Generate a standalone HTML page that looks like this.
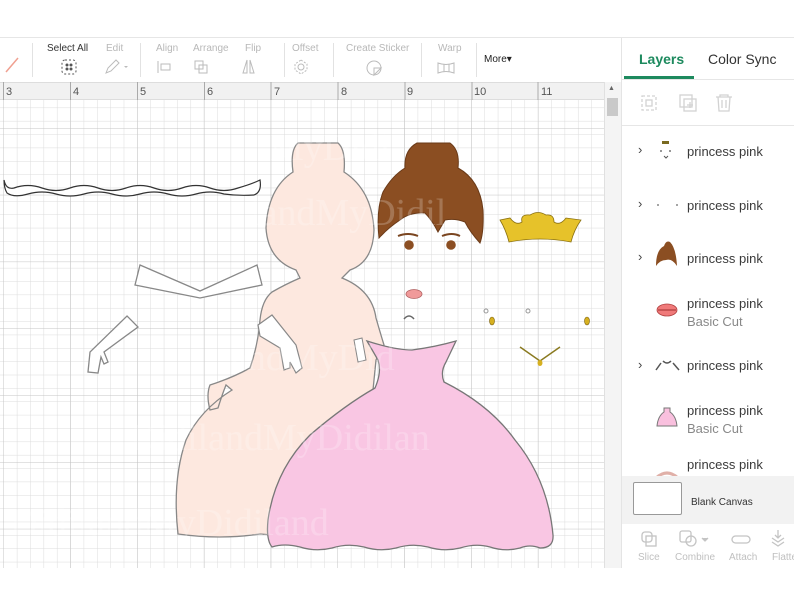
<!DOCTYPE html>
<html><head><meta charset="utf-8"><style>
*{margin:0;padding:0;box-sizing:border-box}
body{width:794px;height:596px;overflow:hidden;background:#fff;font-family:"Liberation Sans",sans-serif;position:relative}
.a{position:absolute}
.tb{font-size:10px;color:#b8b8b8;text-align:center}
.sep{position:absolute;top:43px;width:1px;height:34px;background:#e2e2e2}
.ln{position:absolute;left:687px;font-size:13px;color:#3a3a3a}
.sub{position:absolute;left:687px;font-size:13px;color:#888}
.chev{position:absolute;left:638px;font-size:13px;color:#444}
</style></head><body>
<div class="a" style="left:0;top:37px;width:794px;height:1px;background:#e6e6e6"></div>
<svg class="a" style="left:4px;top:56px" width="16" height="18"><line x1="2" y1="16" x2="14" y2="2" stroke="#f0a090" stroke-width="1.5"/></svg>
<div class="sep" style="left:32px"></div>
<div class="a" style="left:47px;top:43px;font-size:10px;color:#333">Select All</div>
<svg class="a" style="left:60px;top:58px" width="18" height="18"><rect x="2" y="2" width="14" height="14" rx="3" fill="none" stroke="#555" stroke-dasharray="2 2"/><circle cx="7" cy="7" r="1.5" fill="#555"/><circle cx="11" cy="7" r="1.5" fill="#555"/><circle cx="7" cy="11" r="1.5" fill="#555"/><circle cx="11" cy="11" r="1.5" fill="#555"/></svg>
<div class="a tb" style="left:106px;top:43px">Edit</div>
<svg class="a" style="left:103px;top:58px" width="26" height="18"><path d="M3 15 L5 10 L13 2 L16 5 L8 13 Z" fill="none" stroke="#bbb"/><path d="M21 8 l2 2 l2-2" fill="#bbb"/></svg>
<div class="sep" style="left:140px"></div>
<div class="a tb" style="left:156px;top:43px">Align</div>
<div class="a tb" style="left:193px;top:43px">Arrange</div>
<div class="a tb" style="left:245px;top:43px">Flip</div>
<svg class="a" style="left:155px;top:58px" width="120" height="18"><line x1="3" y1="3" x2="3" y2="15" stroke="#bbb"/><rect x="6" y="6" width="9" height="6" fill="none" stroke="#bbb"/><rect x="40" y="3" width="8" height="8" fill="none" stroke="#bbb"/><rect x="44" y="7" width="8" height="8" fill="none" stroke="#bbb"/><path d="M88 15 L92 2 L92 15Z M95 15 L95 2 L99 15Z" fill="none" stroke="#bbb"/></svg>
<div class="sep" style="left:284px"></div>
<div class="a tb" style="left:292px;top:43px">Offset</div>
<svg class="a" style="left:292px;top:58px" width="30" height="18"><path d="M9 2 L15 6 L15 12 L9 16 L3 12 L3 6Z" fill="none" stroke="#bbb" stroke-dasharray="2 1.5"/><circle cx="9" cy="9" r="3" fill="none" stroke="#bbb"/></svg>
<div class="sep" style="left:333px"></div>
<div class="a tb" style="left:346px;top:43px">Create Sticker</div>
<svg class="a" style="left:364px;top:58px" width="30" height="20"><circle cx="10" cy="10" r="7" fill="none" stroke="#bbb"/><path d="M10 17 L17 10 L10 10Z" fill="none" stroke="#bbb"/></svg>
<div class="sep" style="left:421px"></div>
<div class="a tb" style="left:438px;top:43px">Warp</div>
<svg class="a" style="left:436px;top:60px" width="30" height="16"><path d="M2 3 Q10 6 18 3 L18 13 Q10 10 2 13Z" fill="none" stroke="#bbb"/><line x1="8" y1="4" x2="8" y2="12" stroke="#bbb"/><line x1="13" y1="4" x2="13" y2="12" stroke="#bbb"/></svg>
<div class="sep" style="left:476px"></div>
<div class="a" style="left:484px;top:54px;font-size:10px;color:#222">More&#9662;</div>
<div class="a" style="left:0;top:82px;width:604px;height:18px;background:#f1f1f1;border-bottom:1px solid #ddd;border-top:1px solid #ddd"></div>
<svg class="a" style="left:0;top:82px" width="604" height="18">
<g font-size="11" fill="#555" font-family="Liberation Sans">
<text x="6" y="13">3</text><text x="73" y="13">4</text><text x="140" y="13">5</text><text x="207" y="13">6</text><text x="274" y="13">7</text><text x="341" y="13">8</text><text x="407" y="13">9</text><text x="474" y="13">10</text><text x="541" y="13">11</text></g>
<g stroke="#aaa">
<line x1="3.5" y1="0" x2="3.5" y2="18"/><line x1="70.5" y1="0" x2="70.5" y2="18"/><line x1="137.5" y1="0" x2="137.5" y2="18"/><line x1="204.5" y1="0" x2="204.5" y2="18"/><line x1="271" y1="0" x2="271" y2="18"/><line x1="338" y1="0" x2="338" y2="18"/><line x1="405" y1="0" x2="405" y2="18"/><line x1="472" y1="0" x2="472" y2="18"/><line x1="538" y1="0" x2="538" y2="18"/></g>
</svg>
<svg class="a" style="left:0;top:100px" width="604" height="468">
<defs>
<pattern id="mn" x="3.5" y="-5.8" width="13.36" height="13.36" patternUnits="userSpaceOnUse"><path d="M0 0H13.36M0 0V13.36" stroke="#dcdcdc" stroke-width="1" fill="none"/></pattern>
<pattern id="mj" x="3.5" y="28" width="66.8" height="66.8" patternUnits="userSpaceOnUse"><path d="M0 0H66.8M0 0V66.8" stroke="#c4c4c4" stroke-width="1" fill="none"/></pattern>
</defs>
<rect width="604" height="468" fill="#fff"/>
<rect width="604" height="468" fill="url(#mn)"/>
<rect width="604" height="468" fill="url(#mj)"/>
<g transform="translate(0,-100)">
<path d="M4 180 Q6 190 14 188 Q28 183 42 188 Q56 193 70 188 Q84 183 98 188 Q112 193 126 188 Q140 183 154 188 Q168 193 182 188 Q196 183 210 188 Q224 193 238 188 Q252 184 260 180 Q262 192 254 195 Q238 196 224 194 Q210 190 196 194 Q182 198 168 194 Q154 190 140 194 Q126 198 112 194 Q98 190 84 194 Q70 198 56 194 Q42 190 28 194 Q14 198 7 193 Q4 188 4 180Z" fill="#fff" stroke="#333" stroke-width="1.2"/>
<path d="M140 265 L200 291 L257 265 L262 285 L200 298 L135 285Z" fill="#fff" stroke="#888" stroke-width="1.3"/>
<path d="M127 316 L138 327 L104 352 L108 362 L104 364 L101 357 L98 373 L88 372 L90 352Z" fill="#fff" stroke="#888" stroke-width="1.3"/>
<path d="M298 143 L338 143 Q346 150 344 172 Q372 190 374 230 Q373 262 350 270 L342 278 Q372 290 376 318 Q380 332 384 345 L376 360 L372 400 Q394 430 398 470 Q402 500 398 532 Q330 540 260 534 Q220 540 178 534 Q172 480 186 440 Q200 410 232 390 L226 385 Q222 395 218 408 L210 410 Q206 395 210 385 Q232 378 250 368 Q258 345 260 320 Q262 300 272 292 Q286 284 300 278 L296 270 Q268 260 266 228 Q268 188 293 172 Q290 150 298 143Z" fill="#fde8df" stroke="#888" stroke-width="1.3"/>
<path d="M258 325 L272 315 L296 345 L302 368 L296 373 L290 362 L290 368 L284 370 L280 348 L260 336Z" fill="#fff" stroke="#888" stroke-width="1.2"/>
<path d="M354 340 L362 338 L366 360 L358 362Z" fill="#fff" stroke="#888"/>
<path d="M367 341 Q395 350 412 350 Q435 347 456 341 L446 362 Q440 372 444 382 Q490 405 515 440 Q548 480 553 535 Q554 548 540 548 Q530 544 520 548 Q505 552 490 547 Q476 543 460 548 Q444 552 428 547 Q412 543 396 548 Q380 552 364 547 Q348 543 332 548 Q316 552 300 547 Q284 543 272 547 Q266 540 268 520 Q275 470 310 435 Q345 405 375 388 Q382 372 378 360Z" fill="#f9c6e3" stroke="#777" stroke-width="1.3"/>
<path d="M417 143 L450 143 Q460 150 458 168 Q480 180 483 210 Q484 232 480 243 Q470 232 465 222 Q455 218 445 220 L438 232 Q432 220 425 213 Q410 212 400 220 Q388 228 379 238 Q376 210 383 192 Q392 176 405 168 Q404 150 417 143Z" fill="#8b4e22" stroke="#6a3a18" stroke-width="1"/>
<path d="M398 236 Q408 232 418 236 M442 236 Q452 232 460 236" stroke="#7a4520" stroke-width="2" fill="none"/>
<circle cx="409" cy="245" r="4.8" fill="#8b4e22"/><circle cx="451" cy="245" r="4.8" fill="#8b4e22"/>
<ellipse cx="414" cy="294" rx="8" ry="4.5" fill="#f09a9a" stroke="#b06060" stroke-width="0.8"/>
<path d="M404 319 Q409 313 414 319" stroke="#666" stroke-width="1.5" fill="none"/>
<path d="M500 220 L510 218 Q516 226 522 222 Q520 214 530 215 Q538 210 546 215 Q554 214 554 222 Q560 226 566 218 L581 220 Q574 230 571 242 Q540 236 509 242 Q506 230 500 220Z" fill="#e6c22a" stroke="#8a7010" stroke-width="0.8"/>
<circle cx="486" cy="311" r="2" fill="none" stroke="#999"/><circle cx="528" cy="311" r="2" fill="none" stroke="#999"/>
<ellipse cx="492" cy="321" rx="2.5" ry="4" fill="#d6b020" stroke="#7a6010" stroke-width="0.6"/>
<ellipse cx="587" cy="321" rx="2.5" ry="4" fill="#d6b020" stroke="#7a6010" stroke-width="0.6"/>
<path d="M520 347 L540 361 L560 347" stroke="#8a7a20" stroke-width="1.5" fill="none"/>
<ellipse cx="540" cy="363" rx="2.5" ry="3" fill="#d6b020"/>
<g font-family="Liberation Serif" font-size="38" fill="#fff" opacity="0.22">
<text x="270" y="160">MyDidi</text><text x="250" y="225">landMyDidil</text><text x="230" y="370">andMyDid</text><text x="130" y="450">DidilandMyDidilan</text><text x="10" y="535">DidilandMyDidiland</text></g>
</g>
</svg>
<div class="a" style="left:604px;top:82px;width:17px;height:486px;background:#f4f4f4;border-left:1px solid #e0e0e0"></div>
<div class="a" style="left:608px;top:85px;font-size:7px;color:#666">&#9650;</div>
<div class="a" style="left:607px;top:98px;width:11px;height:18px;background:#c9c9c9"></div>
<div class="a" style="left:621px;top:38px;width:1px;height:530px;background:#e4e4e4"></div>
<div class="a" style="left:639px;top:51px;font-size:14px;font-weight:bold;color:#1d8a5e">Layers</div>
<div class="a" style="left:708px;top:51px;font-size:14px;color:#333">Color Sync</div>
<div class="a" style="left:624px;top:76px;width:70px;height:3px;background:#1d8a5e"></div>
<div class="a" style="left:622px;top:79px;width:172px;height:1px;background:#e6e6e6"></div>
<svg class="a" style="left:636px;top:90px" width="110" height="26"><g fill="none" stroke="#d2d2d2" stroke-width="1.3"><rect x="6" y="6" width="14" height="14" stroke-dasharray="3 2"/><rect x="10" y="10" width="6" height="6"/><rect x="44" y="5" width="12" height="12"/><rect x="48" y="9" width="12" height="12"/><path d="M54 15h0M54 12v6M51 15h6"/><path d="M80 7h16M84 7v-2h8v2M82 7l1 14h10l1-14M86 10v8M90 10v8"/></g></svg>
<div class="a" style="left:622px;top:125px;width:172px;height:1px;background:#e6e6e6"></div>
<div class="chev" style="top:142px">&#8250;</div><div class="chev" style="top:196px">&#8250;</div><div class="chev" style="top:249px">&#8250;</div><div class="chev" style="top:357px">&#8250;</div>
<svg class="a" style="left:652px;top:138px" width="30" height="350">
<rect x="10" y="3" width="7" height="3" fill="#7a6a20"/><circle cx="9" cy="13" r="1" fill="#777"/><circle cx="18" cy="13" r="1" fill="#777"/><path d="M12 18l2 2 2-2" stroke="#555" fill="none"/>
<circle cx="6" cy="67" r="1" fill="#888"/><circle cx="25" cy="67" r="1" fill="#888"/>
<path d="M4 128 Q4 112 12 108 Q14 102 18 104 Q24 110 25 128 Q20 120 14 122 Q8 122 4 128Z" fill="#8b4e22"/>
<ellipse cx="15" cy="172" rx="10" ry="6" fill="#f07a7a" stroke="#b04040" stroke-width="0.8"/><line x1="6" y1="172" x2="24" y2="172" stroke="#a03030"/>
<path d="M4 232 L9 225 M11 223 Q15 227 19 223 M21 225 L27 232" stroke="#555" stroke-width="1.5" fill="none"/>
<path d="M5 288 Q6 278 12 274 L12 270 L18 270 L18 274 Q24 278 25 288Z" fill="#f9c0de" stroke="#777"/>
<path d="M4 340 Q15 330 26 340" stroke="#e0b0a8" stroke-width="3" fill="none"/>
</svg>
<div class="ln" style="top:144px">princess pink</div>
<div class="ln" style="top:198px">princess pink</div>
<div class="ln" style="top:251px">princess pink</div>
<div class="ln" style="top:296px">princess pink</div><div class="sub" style="top:314px">Basic Cut</div>
<div class="ln" style="top:358px">princess pink</div>
<div class="ln" style="top:403px">princess pink</div><div class="sub" style="top:421px">Basic Cut</div>
<div class="ln" style="top:457px">princess pink</div>
<div class="a" style="left:622px;top:476px;width:172px;height:48px;background:#f2f2f2"></div>
<div class="a" style="left:633px;top:482px;width:49px;height:33px;background:#fff;border:1px solid #999;border-radius:2px"></div>
<div class="a" style="left:691px;top:497px;font-size:10px;color:#333">Blank Canvas</div>
<svg class="a" style="left:636px;top:528px" width="158" height="22"><g fill="none" stroke="#c4c4c4" stroke-width="1.3"><rect x="6" y="4" width="10" height="10" rx="3"/><rect x="10" y="8" width="10" height="10"/><rect x="44" y="3" width="11" height="11" rx="2"/><circle cx="55" cy="13" r="5"/><path d="M66 10l3 3 3-3" fill="#c4c4c4"/><rect x="96" y="8" width="18" height="7" rx="3.5"/><path d="M142 2v8M139 7l3 3 3-3M136 10l6 4 6-4M136 14l6 4 6-4"/></g></svg>
<div class="a" style="left:638px;top:552px;font-size:10px;color:#c0c0c0">Slice</div>
<div class="a" style="left:675px;top:552px;font-size:10px;color:#c0c0c0">Combine</div>
<div class="a" style="left:729px;top:552px;font-size:10px;color:#c0c0c0">Attach</div>
<div class="a" style="left:772px;top:552px;font-size:10px;color:#c0c0c0">Flatten</div>
<div class="a" style="left:0;top:568px;width:794px;height:28px;background:#fff"></div>
</body></html>
